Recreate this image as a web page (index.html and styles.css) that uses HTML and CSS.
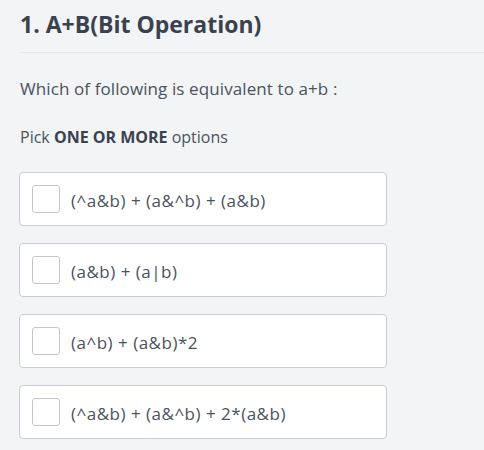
FILE: index.html
```html
<!DOCTYPE html>
<html>
<head>
<meta charset="utf-8">
<link rel="stylesheet" href="styles.css">
</head>
<body>
<div class="page">
  <h1 class="title">1. A+B(Bit Operation)</h1>
  <div class="divider"></div>
  <p class="question">Which of following is equivalent to a+b :</p>
  <p class="hint">Pick <b>ONE OR MORE</b> options</p>
  <div class="options">
    <label class="option"><span class="box"></span><span class="text">(^a&amp;b) + (a&amp;^b) + (a&amp;b)</span></label>
    <label class="option"><span class="box"></span><span class="text">(a&amp;b) + (a|b)</span></label>
    <label class="option"><span class="box"></span><span class="text">(a^b) + (a&amp;b)*2</span></label>
    <label class="option"><span class="box"></span><span class="text">(^a&amp;b) + (a&amp;^b) + 2*(a&amp;b)</span></label>
  </div>
</div>
</body>
</html>
```
FILE: styles.css
```css
html, body {
  margin: 0;
  padding: 0;
  background: #f3f4f6;
}
body {
  font-family: "Open Sans", "Liberation Sans", sans-serif;
  color: #39424e;
}
.page {
  padding: 0 0 0 20px;
}
.title {
  margin: 0;
  padding-top: 9px;
  font-size: 23px;
  line-height: 30px;
  font-weight: 700;
  color: #39424e;
  margin-bottom: 13px;
}
.divider {
  height: 1px;
  background: #e6e8eb;
  margin-bottom: 24px;
}
.question {
  margin: 0;
  font-size: 17px;
  line-height: 24px;
  letter-spacing: 0.1px;
  color: #4a525c;
}
.hint {
  margin: 24px 0 0;
  font-size: 16px;
  line-height: 24px;
  color: #4a525c;
}
.hint b {
  font-weight: 700;
  color: #39424e;
}
.options {
  margin-top: 23px;
  margin-left: -1px;
  display: flex;
  flex-direction: column;
  gap: 17px;
  width: 368px;
}
.option {
  display: flex;
  align-items: center;
  height: 52px;
  border: 1px solid #c9ced6;
  border-radius: 4px;
  background: #ffffff;
  padding-left: 12px;
}
.box {
  width: 26px;
  height: 26px;
  border: 1px solid #c2c7cf;
  border-radius: 3px;
  background: #fff;
  flex: none;
}
.text {
  margin-left: 11px;
  font-size: 17px;
  letter-spacing: 0.5px;
  color: #4a525c;
  padding-top: 2px;
}
```
